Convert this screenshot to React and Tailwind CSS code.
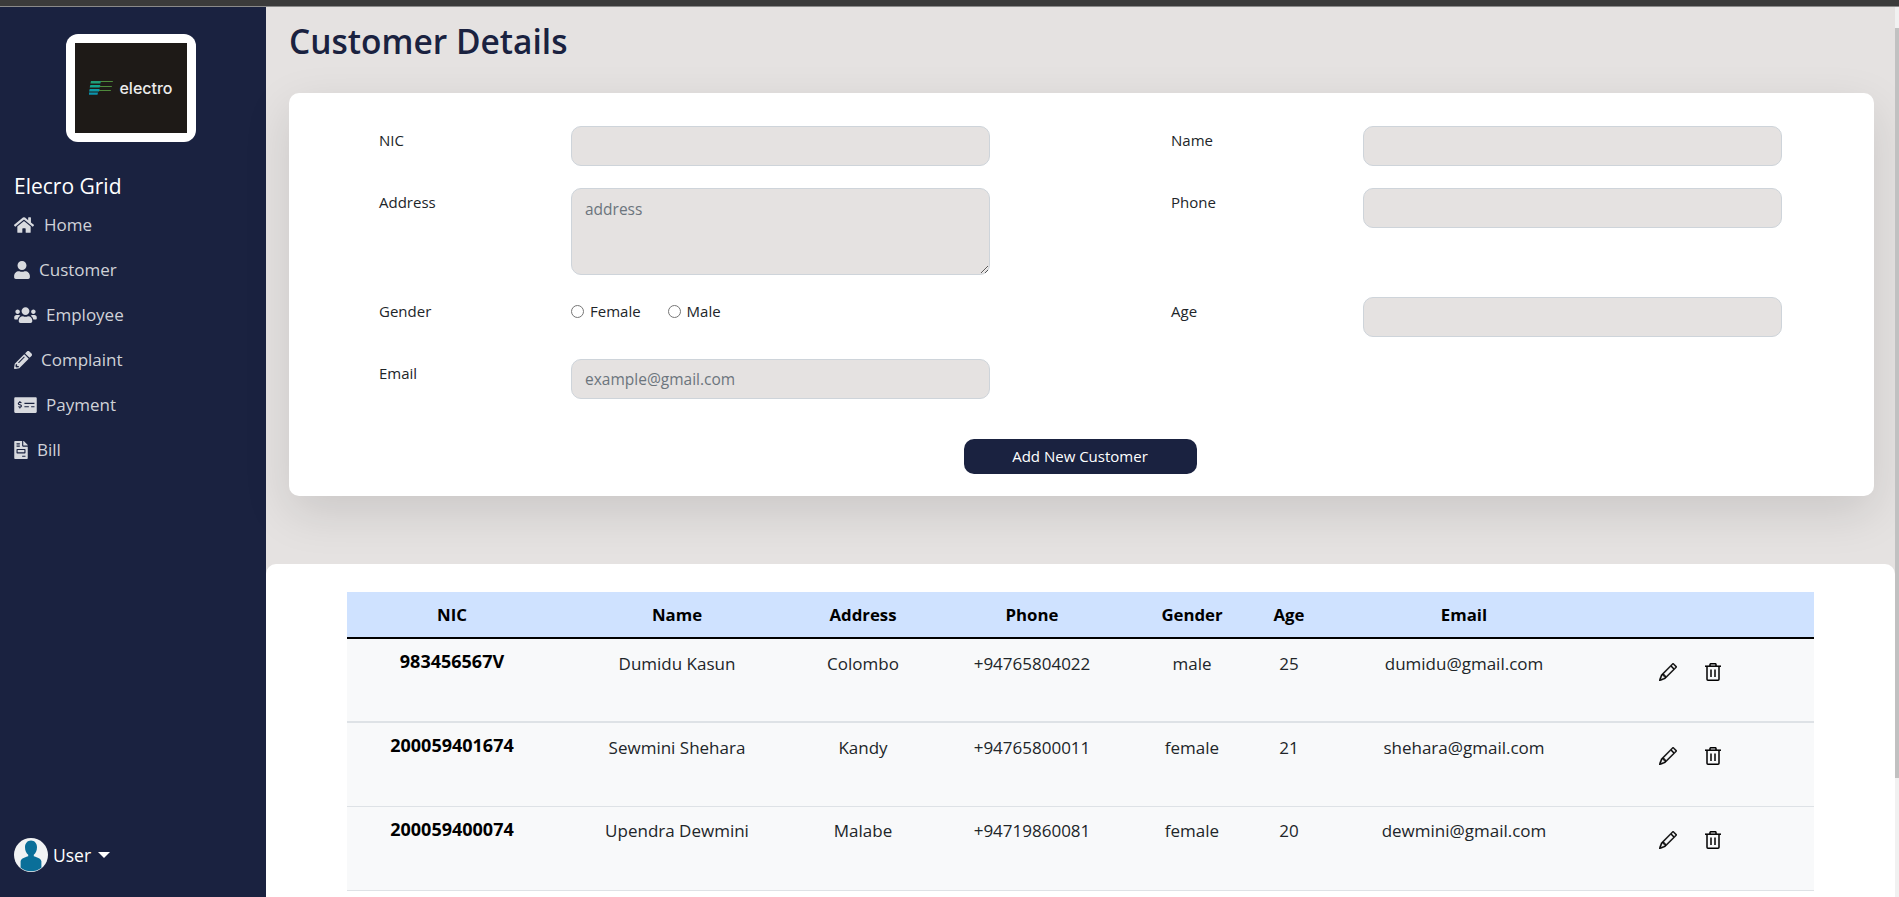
import { FaHome, FaUser, FaUsers, FaPencilAlt, FaMoneyCheckAlt, FaFileInvoice } from "react-icons/fa";
import { BsPencil } from "react-icons/bs";

const NAV_ITEMS = [
  { label: "Home", icon: FaHome, iconClass: "w-[20px] h-[18px]", gap: "ml-[10px]" },
  { label: "Customer", icon: FaUser, iconClass: "w-[16px] h-[18px]", gap: "ml-[9px]" },
  { label: "Employee", icon: FaUsers, iconClass: "w-[23px] h-[18px]", gap: "ml-[9px]" },
  { label: "Complaint", icon: FaPencilAlt, iconClass: "w-[18px] h-[18px]", gap: "ml-[9px]" },
  { label: "Payment", icon: FaMoneyCheckAlt, iconClass: "w-[23px] h-[18px]", gap: "ml-[9px]" },
  { label: "Bill", icon: FaFileInvoice, iconClass: "w-[14px] h-[18px]", gap: "ml-[9px]" },
];

const CUSTOMERS = [
  ["983456567V", "Dumidu Kasun", "Colombo", "+94765804022", "male", "25", "dumidu@gmail.com"],
  ["200059401674", "Sewmini Shehara", "Kandy", "+94765800011", "female", "21", "shehara@gmail.com"],
  ["200059400074", "Upendra Dewmini", "Malabe", "+94719860081", "female", "20", "dewmini@gmail.com"],
];

const HEADERS = ["NIC", "Name", "Address", "Phone", "Gender", "Age", "Email", ""];
const COL_WIDTHS = ["w-[210px]", "w-[240px]", "w-[132px]", "w-[206px]", "w-[114px]", "w-[80px]", "w-[270px]", "w-[215px]"];

function Logo() {
  return (
    <div className="ml-[66px] flex h-[108px] w-[130px] rounded-[12px] bg-white p-[9px]">
      <div className="flex h-full w-full items-center justify-center gap-[5px] bg-[#1e1a17]">
        <svg width="25" height="14" viewBox="0 0 25 14">
          <path d="M2 0h10l-.6 2.6H1.4z" fill="#1f9d7a" />
          <path d="M12 0h12l-.3 1H12z" fill="#4f8a3c" />
          <path d="M1.3 4h10l-.6 2.6H.7z" fill="#12a38f" />
          <path d="M11 5h12l-.3 1H11z" fill="#4f8a3c" />
          <path d="M.7 8h10l-.6 2.4H.1z" fill="#0e9aa7" />
          <path d="M10 9h12l-.3 1H10z" fill="#4f8a3c" />
          <path d="M0 11.5h9l-.5 2.3H0z" fill="#0b93ad" />
        </svg>
        <span className="font-['Inter',sans-serif] text-[16px] leading-none font-medium text-[#ececec]">electro</span>
      </div>
    </div>
  );
}

function Avatar() {
  return (
    <svg width="34" height="34" viewBox="0 0 34 34" className="shrink-0">
      <circle cx="17" cy="17" r="17" fill="#f1f3f4" />
      <path d="M17 2.5c3.6 0 6 2.8 6 6.8 0 3.4-1.4 6-3.2 7.4v1.6c2.6 1 7 1.8 7.6 5v6.4a17 17 0 0 1-20.8 0v-6.4c.6-3.2 5-4 7.6-5v-1.6C12.4 15.3 11 12.7 11 9.3c0-4 2.4-6.8 6-6.8z" fill="#0a6f99" />
    </svg>
  );
}

function TrashIcon() {
  return (
    <svg width="16" height="18" viewBox="0 0 16 18" fill="none" stroke="#000" strokeWidth="1.5">
      <path d="M0 3.2h16" />
      <path d="M5 3V1.6c0-.5.4-.9.9-.9h4.2c.5 0 .9.4.9.9V3" />
      <path d="M2 3.2v13c0 .6.4 1 1 1h10c.6 0 1-.4 1-1v-13" />
      <path d="M6 6.5v7.5M10 6.5v7.5" />
    </svg>
  );
}

function Sidebar() {
  return (
    <aside className="flex w-[266px] shrink-0 flex-col bg-[#1a2240] pt-[27px]">
      <Logo />
      <div className="mt-[29px] pl-[14px] text-[21px] leading-[30px] text-white">Elecro Grid</div>
      <nav className="mt-[1px] flex flex-col pl-[14px]">
        {NAV_ITEMS.map(({ label, icon: Icon, iconClass, gap }) => (
          <a key={label} className="flex h-[45px] items-center text-[17px] text-[#d0d2d8]">
            <Icon className={`${iconClass} shrink-0 text-[#d8dadf]`} />
            <span className={gap}>{label}</span>
          </a>
        ))}
      </nav>
      <div className="mt-auto mb-[25px] flex items-center pl-[14px] text-[17.5px] text-white">
        <Avatar />
        <span className="ml-[5px]">User</span>
        <svg width="12" height="6" viewBox="0 0 12 6" className="ml-[7px]">
          <path d="M0 0h12L6 6z" fill="#fff" />
        </svg>
      </div>
    </aside>
  );
}

function Field({ label, children }) {
  return (
    <div className="flex items-start">
      <label className="w-[192px] shrink-0 pt-[3px] text-[15px] leading-[22px] font-medium text-[#212529]">{label}</label>
      {children}
    </div>
  );
}

const INPUT = "block h-[40px] w-[419px] rounded-[10px] border border-[#ced4da] bg-[#e5e2e1] px-[13px] text-[15.5px] text-[#212529] placeholder:text-[#6c757d] outline-none";

function CustomerForm() {
  return (
    <form className="mt-[32px] mr-[21px] ml-[23px] h-[403px] rounded-[10px] bg-white pt-[33px] pr-[92px] pl-[90px] shadow-[0_16px_48px_rgba(0,0,0,0.12)]">
      <div className="grid grid-cols-[611px_611px] justify-between gap-y-[22px]">
        <Field label="NIC"><input className={INPUT} /></Field>
        <Field label="Name"><input className={INPUT} /></Field>
        <Field label="Address">
          <textarea placeholder="address" className={`${INPUT} h-[87px] resize-y pt-[9px]`} />
        </Field>
        <Field label="Phone"><input className={INPUT} /></Field>
        <Field label="Gender">
          <div className="flex items-center pt-[3px] text-[15px] leading-[22px] font-medium text-[#212529]">
            <input type="radio" name="gender" className="h-[13px] w-[13px]" />
            <span className="ml-[6px]">Female</span>
            <input type="radio" name="gender" className="ml-[27px] h-[13px] w-[13px]" />
            <span className="ml-[6px]">Male</span>
          </div>
        </Field>
        <Field label="Age"><input className={INPUT} /></Field>
        <Field label="Email"><input placeholder="example@gmail.com" className={INPUT} /></Field>
      </div>
      <div className="mt-[40px] flex justify-center pr-[1px]">
        <button type="button" className="h-[35px] w-[233px] rounded-[10px] bg-[#1a2240] text-[15px] text-white">
          Add New Customer
        </button>
      </div>
    </form>
  );
}

function CustomerTable() {
  return (
    <section className="relative mt-[68px] flex-1 rounded-t-[10px] bg-white pt-[28px] pl-[81px]">
      <table className="w-[1467px] table-fixed border-collapse text-center text-[17px] text-[#212529]">
        <thead>
          <tr className="h-[46px] border-b-[2px] border-black bg-[#cfe2ff] text-[16.8px] font-bold text-black">
            {HEADERS.map((h, i) => (
              <th key={i} className={`${COL_WIDTHS[i]} align-middle font-bold`}>{h}</th>
            ))}
          </tr>
        </thead>
        <tbody>
          {CUSTOMERS.map((row, r) => (
            <tr key={row[0]} className={`h-[84px] border-[#dee2e6] bg-[#f8f9fa] ${r === 0 ? "border-b-[2px]" : "border-b"}`}>
              {row.map((cell, i) => (
                <td key={i} className={`align-top leading-[24px] ${i === 0 ? "pt-[10px] text-[18px] font-bold text-black" : "pt-[12.5px]"}`}>{cell}</td>
              ))}
              <td className="pt-[24px] align-top">
                <div className="flex items-center gap-[28px] pl-[60px]">
                  <BsPencil className="h-[18px] w-[18px] stroke-current stroke-[0.4px] text-black" />
                  <TrashIcon />
                </div>
              </td>
            </tr>
          ))}
        </tbody>
      </table>
    </section>
  );
}

export default function App() {
  return (
    <div className="flex h-[897px] flex-col overflow-hidden bg-[#e5e2e1] font-['Open_Sans',sans-serif]">
      <div className="h-[7px] shrink-0 border-b border-[#8a8a8a] bg-[#3b3b3b]" />
      <div className="flex min-h-0 flex-1">
        <Sidebar />
        <main className="flex min-w-0 flex-1 flex-col">
          <h1 className="mt-[14px] ml-[23px] text-[33.5px] leading-[40px] font-semibold text-[#1a2240]">Customer Details</h1>
          <CustomerForm />
          <CustomerTable />
        </main>
        <div className="w-[4px] shrink-0 bg-[#f1f1f1] pt-[21px]">
          <div className="h-[750px] w-full bg-[#c1c1c1]" />
        </div>
      </div>
    </div>
  );
}
